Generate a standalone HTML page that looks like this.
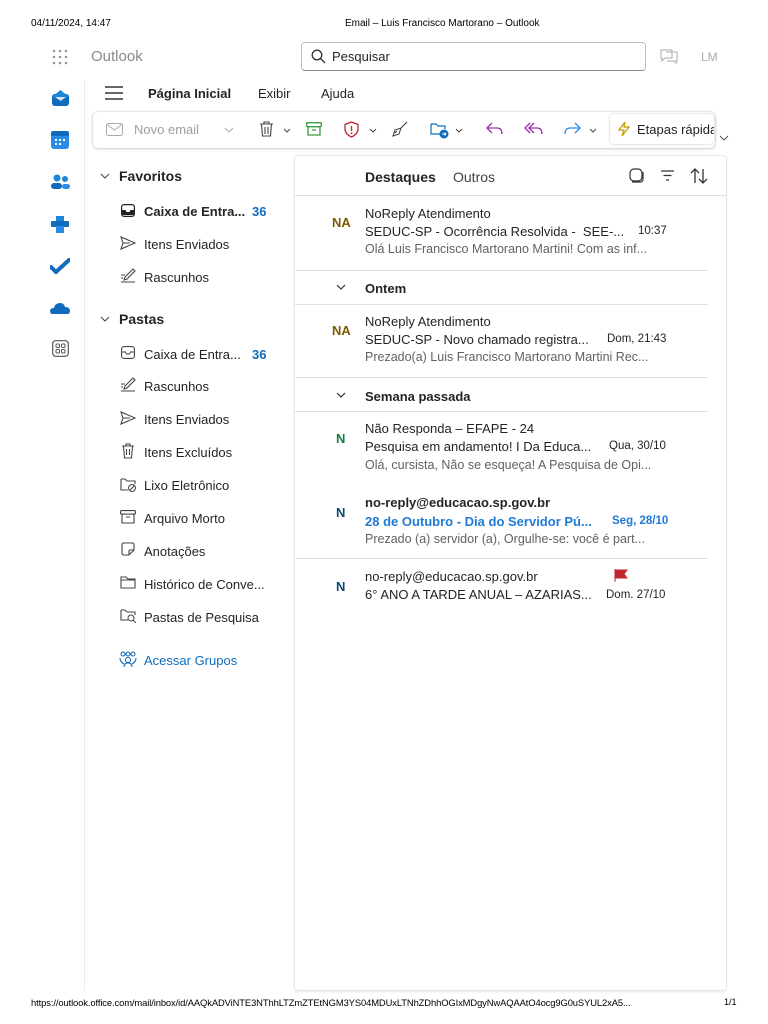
<!DOCTYPE html>
<html><head><meta charset="utf-8"><style>
*{margin:0;padding:0;box-sizing:border-box}
body{width:768px;height:1024px;background:#fff;font-family:"Liberation Sans",sans-serif;color:#242424;position:relative;overflow:hidden}
.a{position:absolute;white-space:nowrap}
.s13{font-size:13px}
.g{color:#616161}
.b{font-weight:bold}
.blue{color:#0f6cbd}
.line{position:absolute;height:1px;background:#e0e0e0}
svg{position:absolute}
</style></head><body>
<div class="a" style="left:31px;top:18px;font-size:10px;color:#000">04/11/2024, 14:47</div>
<div class="a" style="left:345px;top:18px;font-size:10px;color:#000">Email – Luis Francisco Martorano – Outlook</div>
<div class="a" style="left:31px;top:997px;font-size:9.4px;color:#000;letter-spacing:-0.1px">https://outlook.office.com/mail/inbox/id/AAQkADViNTE3NThhLTZmZTEtNGM3YS04MDUxLTNhZDhhOGIxMDgyNwAQAAtO4ocg9G0uSYUL2xA5...</div>
<div class="a" style="left:724px;top:997px;font-size:9px;color:#000">1/1</div>

<!-- header -->
<svg style="left:52px;top:49px" width="16" height="16"><g fill="#999"><circle cx="2" cy="2" r="1.3"/><circle cx="8" cy="2" r="1.3"/><circle cx="14" cy="2" r="1.3"/><circle cx="2" cy="8" r="1.3"/><circle cx="8" cy="8" r="1.3"/><circle cx="14" cy="8" r="1.3"/><circle cx="2" cy="14" r="1.3"/><circle cx="8" cy="14" r="1.3"/><circle cx="14" cy="14" r="1.3"/></g></svg>
<div class="a" style="left:91px;top:48px;font-size:15px;color:#8a8a8a">Outlook</div>
<div class="a" style="left:301px;top:42px;width:345px;height:29px;border:1px solid #bdbdbd;border-bottom-color:#888;border-radius:4px"></div>
<svg style="left:311px;top:49px" width="15" height="15"><circle cx="6" cy="6" r="4.8" fill="none" stroke="#333" stroke-width="1.3"/><path d="M9.5 9.5 L14 14" stroke="#333" stroke-width="1.3"/></svg>
<div class="a s13" style="left:332px;top:49px">Pesquisar</div>
<svg style="left:660px;top:48px" width="18" height="16"><path d="M1 2h11v8H5l-3 3v-3H1z M6 4h11v9h-1v2l-2-2H7" fill="none" stroke="#aaa" stroke-width="1"/></svg>
<div class="a" style="left:701px;top:50px;font-size:12px;color:#aaa">LM</div>

<!-- left rail -->
<div style="position:absolute;left:84px;top:80px;width:1px;height:910px;background:#ececec"></div>
<svg style="left:51px;top:89px" width="19" height="18"><rect x="1" y="5" width="17" height="12" rx="3" fill="#0f6cbd"/><path d="M1 8 L9.5 1 L18 8" fill="#1a86d9"/><path d="M4 8 L15 8 L9.5 12z" fill="#fff" opacity=".8"/></svg>
<svg style="left:51px;top:131px" width="18" height="18"><rect x="0" y="0" width="18" height="18" rx="3" fill="#2a8ce6"/><rect x="0" y="0" width="18" height="5" rx="2" fill="#0f6cbd"/><g fill="#fff"><rect x="4" y="8" width="2" height="2"/><rect x="8" y="8" width="2" height="2"/><rect x="12" y="8" width="2" height="2"/><rect x="4" y="12" width="2" height="2"/><rect x="8" y="12" width="2" height="2"/></g></svg>
<svg style="left:51px;top:174px" width="19" height="17"><circle cx="6" cy="4" r="3.5" fill="#1a86d9"/><circle cx="14" cy="5" r="3" fill="#1a86d9"/><rect x="0" y="9" width="11" height="6" rx="3" fill="#0f6cbd"/><rect x="11" y="10" width="8" height="5" rx="2.5" fill="#2a8ce6"/></svg>
<svg style="left:51px;top:216px" width="18" height="18"><rect x="5" y="0" width="8" height="6" fill="#1a86d9"/><rect x="0" y="5" width="18" height="6" rx="1" fill="#0f6cbd"/><rect x="5" y="10" width="8" height="7" fill="#2a8ce6"/></svg>
<svg style="left:50px;top:258px" width="20" height="16"><path d="M1 9 L6 14 L19 2" fill="none" stroke="#0f6cbd" stroke-width="4" stroke-linecap="round"/></svg>
<svg style="left:50px;top:301px" width="21" height="14"><path d="M3 13 Q0 13 0 10 Q0 7 4 7 Q5 2 10 2 Q14 2 15 6 Q20 6 20 10 Q20 13 17 13z" fill="#0f6cbd"/></svg>
<svg style="left:52px;top:340px" width="17" height="17"><rect x="0.7" y="0.7" width="15.6" height="15.6" rx="3" fill="none" stroke="#555" stroke-width="1.2"/><g fill="none" stroke="#555"><rect x="4" y="4" width="3.5" height="3.5" rx="1"/><rect x="9.5" y="4" width="3.5" height="3.5" rx="1"/><rect x="4" y="9.5" width="3.5" height="3.5" rx="1"/><rect x="9.5" y="9.5" width="3.5" height="3.5" rx="1"/></g></svg>

<!-- nav tabs -->
<svg style="left:105px;top:86px" width="18" height="14"><path d="M0 1h18M0 7h18M0 13h18" stroke="#333" stroke-width="1.5"/></svg>
<div class="a s13 b" style="left:148px;top:86px;font-weight:600">Página Inicial</div>
<div class="a s13" style="left:258px;top:86px">Exibir</div>
<div class="a s13" style="left:321px;top:86px">Ajuda</div>

<!-- toolbar -->
<div class="a" style="left:93px;top:112px;width:622px;height:36px;border-radius:5px;box-shadow:0 0 2px rgba(0,0,0,.2),0 1px 3px rgba(0,0,0,.15)"></div>
<svg style="left:106px;top:123px" width="17" height="13"><rect x="0.5" y="0.5" width="16" height="12" rx="2" fill="none" stroke="#aaa"/><path d="M1 1.5 L8.5 7 L16 1.5" fill="none" stroke="#aaa"/></svg>
<div class="a s13" style="left:134px;top:122px;color:#9e9e9e">Novo email</div>
<svg style="left:224px;top:127px" width="10" height="6"><path d="M1 1l4 4 4-4" fill="none" stroke="#aaa"/></svg>
<svg style="left:259px;top:121px" width="15" height="16"><path d="M1 3h13M5 3V1h5v2M2.5 3l1 12h8l1-12M6 6v7M9 6v7" fill="none" stroke="#444" stroke-width="1.1"/></svg>
<svg style="left:283px;top:128px" width="8" height="5"><path d="M1 1l3 3 3-3" fill="none" stroke="#444"/></svg>
<svg style="left:306px;top:122px" width="16" height="14"><rect x="0.7" y="0.7" width="14.6" height="4" rx="1" fill="none" stroke="#3a9a3a" stroke-width="1.3"/><path d="M2 5v8h12V5M6 8h4" fill="none" stroke="#3a9a3a" stroke-width="1.3"/></svg>
<svg style="left:344px;top:121px" width="15" height="17"><path d="M7.5 1 L14 3.5 V8 Q14 13 7.5 16 Q1 13 1 8 V3.5z" fill="none" stroke="#c4262e" stroke-width="1.3"/><path d="M7.5 5v5" stroke="#c4262e" stroke-width="1.4"/><circle cx="7.5" cy="12.3" r=".9" fill="#c4262e"/></svg>
<svg style="left:369px;top:128px" width="8" height="5"><path d="M1 1l3 3 3-3" fill="none" stroke="#444"/></svg>
<svg style="left:391px;top:121px" width="17" height="16"><path d="M16 1 L9 8 M10 7 L4 9 L2 15 L8 13 L10 7z M4 12 L6 10" fill="none" stroke="#444" stroke-width="1.1"/></svg>
<svg style="left:430px;top:121px" width="20" height="18"><path d="M1 3v10h9M1 3h5l2 2h7v3" fill="none" stroke="#0f6cbd" stroke-width="1.2"/><circle cx="14" cy="13" r="4.5" fill="#0f6cbd"/><path d="M12 13h4M14.5 11.5l1.5 1.5-1.5 1.5" fill="none" stroke="#fff"/></svg>
<svg style="left:455px;top:128px" width="8" height="5"><path d="M1 1l3 3 3-3" fill="none" stroke="#444"/></svg>
<svg style="left:486px;top:122px" width="18" height="14"><path d="M6 1 L1 6 L6 11 M1 6 H11 Q16 6 16 12" fill="none" stroke="#9b2fae" stroke-width="1.3"/></svg>
<svg style="left:524px;top:122px" width="20" height="14"><path d="M6 1 L1 6 L6 11 M10 1 L5 6 L10 11 M5 6 H13 Q18 6 18 12" fill="none" stroke="#9b2fae" stroke-width="1.3"/></svg>
<svg style="left:563px;top:122px" width="18" height="14"><path d="M12 1 L17 6 L12 11 M17 6 H7 Q2 6 2 12" fill="none" stroke="#2a8ce6" stroke-width="1.3"/></svg>
<svg style="left:589px;top:128px" width="8" height="5"><path d="M1 1l3 3 3-3" fill="none" stroke="#444"/></svg>
<div class="a" style="left:610px;top:114px;width:104px;height:30px;border-radius:4px;box-shadow:0 0 2px rgba(0,0,0,.25);overflow:hidden">
<svg style="left:7px;top:7px" width="14" height="16"><path d="M8 1 L2 9 H7 L5 15 L12 6 H7z" fill="none" stroke="#c19c00" stroke-width="1.2"/></svg>
<div class="a s13" style="left:27px;top:8px">Etapas rápidas</div></div>
<svg style="left:719px;top:135px" width="10" height="6"><path d="M1 1l4 4 4-4" fill="none" stroke="#555"/></svg>

<!-- folders -->
<svg style="left:100px;top:173px" width="10" height="6"><path d="M1 1l4 4 4-4" fill="none" stroke="#444"/></svg>
<div class="a b" style="left:119px;top:168px;font-size:14px;font-weight:600">Favoritos</div>
<svg style="left:121px;top:204px" width="14" height="13"><rect x="0.6" y="0.6" width="12.8" height="11.8" rx="2.5" fill="none" stroke="#222" stroke-width="1.2"/><path d="M1 6h3.5l1 2h3l1-2H13V11H1z" fill="#222"/></svg>
<div class="a s13 b" style="left:144px;top:204px">Caixa de Entra...</div>
<div class="a s13 b blue" style="left:252px;top:204px">36</div>
<svg style="left:120px;top:236px" width="16" height="14"><path d="M1 1 L15 7 L1 13 L3 7z M3 7h7" fill="none" stroke="#444" stroke-width="1.1"/></svg>
<div class="a s13" style="left:144px;top:237px">Itens Enviados</div>
<svg style="left:120px;top:268px" width="16" height="15"><path d="M13 1 L15 3 L7 11 L4 12 L5 9z M1 7h4M1 10h2M1 14h14" fill="none" stroke="#444" stroke-width="1.1"/></svg>
<div class="a s13" style="left:144px;top:270px">Rascunhos</div>

<svg style="left:100px;top:316px" width="10" height="6"><path d="M1 1l4 4 4-4" fill="none" stroke="#444"/></svg>
<div class="a b" style="left:119px;top:311px;font-size:14px;font-weight:600">Pastas</div>
<svg style="left:121px;top:346px" width="14" height="13"><rect x="0.6" y="0.6" width="12.8" height="11.8" rx="2.5" fill="none" stroke="#444" stroke-width="1.1"/><path d="M1 6h3.5l1 2h3l1-2H13" fill="none" stroke="#444"/></svg>
<div class="a s13" style="left:144px;top:347px">Caixa de Entra...</div>
<div class="a s13 b blue" style="left:252px;top:347px">36</div>
<svg style="left:120px;top:377px" width="16" height="15"><path d="M13 1 L15 3 L7 11 L4 12 L5 9z M1 7h4M1 10h2M1 14h14" fill="none" stroke="#444" stroke-width="1.1"/></svg>
<div class="a s13" style="left:144px;top:379px">Rascunhos</div>
<svg style="left:120px;top:411px" width="16" height="14"><path d="M1 1 L15 7 L1 13 L3 7z M3 7h7" fill="none" stroke="#444" stroke-width="1.1"/></svg>
<div class="a s13" style="left:144px;top:412px">Itens Enviados</div>
<svg style="left:121px;top:443px" width="14" height="16"><path d="M1 3h12M5 3V1h4v2M2.5 3l1 12h7l1-12M5.5 6v6M8.5 6v6" fill="none" stroke="#444" stroke-width="1.1"/></svg>
<div class="a s13" style="left:144px;top:445px">Itens Excluídos</div>
<svg style="left:120px;top:477px" width="17" height="15"><path d="M1 2v11h7M1 2h4l2 2h8v3" fill="none" stroke="#444" stroke-width="1.1"/><circle cx="12" cy="11" r="3.5" fill="none" stroke="#444"/><path d="M9.5 13.5l5-5" stroke="#444"/></svg>
<div class="a s13" style="left:144px;top:478px">Lixo Eletrônico</div>
<svg style="left:120px;top:510px" width="16" height="14"><rect x="0.6" y="0.6" width="14.8" height="3.5" rx="1" fill="none" stroke="#444" stroke-width="1.1"/><path d="M2 4v9h12V4M6 7h4" fill="none" stroke="#444" stroke-width="1.1"/></svg>
<div class="a s13" style="left:144px;top:511px">Arquivo Morto</div>
<svg style="left:121px;top:542px" width="14" height="14"><path d="M1 3 Q1 1 3 1 H11 Q13 1 13 3 V8 L8 13 H3 Q1 13 1 11z M8 13 V9 Q8 8 9 8 H13" fill="none" stroke="#444" stroke-width="1.1"/></svg>
<div class="a s13" style="left:144px;top:544px">Anotações</div>
<svg style="left:120px;top:576px" width="16" height="13"><path d="M1 1h5l2 2h7v9H1z M1 4h14" fill="none" stroke="#444" stroke-width="1.1"/></svg>
<div class="a s13" style="left:144px;top:577px">Histórico de Conve...</div>
<svg style="left:120px;top:608px" width="17" height="15"><path d="M1 2v10h7M1 2h4l2 2h8v3" fill="none" stroke="#444" stroke-width="1.1"/><circle cx="11" cy="10" r="3" fill="none" stroke="#444"/><path d="M13 12l3 3" stroke="#444"/></svg>
<div class="a s13" style="left:144px;top:610px">Pastas de Pesquisa</div>
<svg style="left:119px;top:651px" width="18" height="17"><g fill="none" stroke="#0f6cbd" stroke-width="1.1"><circle cx="4" cy="3" r="2"/><circle cx="9" cy="3" r="2"/><circle cx="14" cy="3" r="2"/><circle cx="9" cy="9" r="2.5"/><path d="M1 7 Q1 11 5 13 M17 7 Q17 11 13 13 M5 16 Q5 12 9 12 Q13 12 13 16"/></g></svg>
<div class="a s13 blue" style="left:144px;top:653px">Acessar Grupos</div>

<!-- message list panel -->
<div class="a" style="left:294px;top:155px;width:433px;height:836px;border:1px solid #e6e6e6;border-radius:4px;box-shadow:0 1px 2px rgba(0,0,0,.08)"></div>
<div class="a" style="left:365px;top:169px;font-size:14px;font-weight:600">Destaques</div>
<div class="a" style="left:453px;top:169px;font-size:14px;color:#424242">Outros</div>
<svg style="left:629px;top:168px" width="15" height="15"><rect x="1" y="1" width="12" height="12" rx="4" fill="none" stroke="#333" stroke-width="1.2"/><path d="M3 14 H11 Q14 14 14 11 V4" fill="none" stroke="#333" stroke-width="1.2"/></svg>
<svg style="left:660px;top:170px" width="15" height="11"><path d="M1 1h13M3.5 5.5h8M6 10h3" stroke="#333" stroke-width="1.2"/></svg>
<svg style="left:690px;top:168px" width="18" height="16"><path d="M5 15V1M1 5l4-4 4 4M13 1v14M9 11l4 4 4-4" fill="none" stroke="#333" stroke-width="1.3"/></svg>
<div class="line" style="left:295px;top:195px;width:431px"></div>

<div class="a s13 b" style="left:332px;top:215px;color:#7a5c00">NA</div>
<div class="a s13" style="left:365px;top:206px">NoReply Atendimento</div>
<div class="a s13" style="left:365px;top:224px">SEDUC-SP - Ocorrência Resolvida -&nbsp; SEE-...</div>
<div class="a" style="left:638px;top:225px;font-size:11.5px">10:37</div>
<div class="a" style="left:365px;top:242px;font-size:12.5px;color:#616161">Olá Luis Francisco Martorano Martini! Com as inf...</div>
<div class="line" style="left:295px;top:270px;width:413px"></div>
<svg style="left:336px;top:284px" width="10" height="6"><path d="M1 1l4 4 4-4" fill="none" stroke="#333" stroke-width="1.2"/></svg>
<div class="a s13 b" style="left:365px;top:281px;font-weight:600">Ontem</div>
<div class="line" style="left:295px;top:304px;width:413px"></div>

<div class="a s13 b" style="left:332px;top:323px;color:#7a5c00">NA</div>
<div class="a s13" style="left:365px;top:314px">NoReply Atendimento</div>
<div class="a s13" style="left:365px;top:332px">SEDUC-SP - Novo chamado registra...</div>
<div class="a" style="left:607px;top:333px;font-size:11.5px">Dom, 21:43</div>
<div class="a" style="left:365px;top:350px;font-size:12.5px;color:#616161">Prezado(a) Luis Francisco Martorano Martini Rec...</div>
<div class="line" style="left:295px;top:377px;width:413px"></div>
<svg style="left:336px;top:392px" width="10" height="6"><path d="M1 1l4 4 4-4" fill="none" stroke="#333" stroke-width="1.2"/></svg>
<div class="a s13 b" style="left:365px;top:389px;font-weight:600">Semana passada</div>
<div class="line" style="left:295px;top:411px;width:413px"></div>

<div class="a s13 b" style="left:336px;top:431px;color:#107c41">N</div>
<div class="a s13" style="left:365px;top:421px">Não Responda – EFAPE - 24</div>
<div class="a s13" style="left:365px;top:439px">Pesquisa em andamento! I Da Educa...</div>
<div class="a" style="left:609px;top:440px;font-size:11.5px">Qua, 30/10</div>
<div class="a" style="left:365px;top:458px;font-size:12.5px;color:#616161">Olá, cursista, Não se esqueça! A Pesquisa de Opi...</div>

<div class="a s13 b" style="left:336px;top:505px;color:#0b4a6f">N</div>
<div class="a s13 b" style="left:365px;top:495px">no-reply@educacao.sp.gov.br</div>
<div class="a s13 b blue" style="left:365px;top:514px;color:#1f7ad6">28 de Outubro - Dia do Servidor Pú...</div>
<div class="a b" style="left:612px;top:515px;font-size:11.5px;color:#1f7ad6">Seg, 28/10</div>
<div class="a" style="left:365px;top:532px;font-size:12.5px;color:#616161">Prezado (a) servidor (a), Orgulhe-se: você é part...</div>
<div class="line" style="left:295px;top:558px;width:413px"></div>

<div class="a s13 b" style="left:336px;top:579px;color:#0b4a6f">N</div>
<div class="a s13" style="left:365px;top:569px">no-reply@educacao.sp.gov.br</div>
<svg style="left:614px;top:569px" width="14" height="13"><path d="M1 0v13M1 1h12l-3 4 3 4H1" fill="#c4262e" stroke="#c4262e"/></svg>
<div class="a s13" style="left:365px;top:587px">6° ANO A TARDE ANUAL – AZARIAS...</div>
<div class="a" style="left:606px;top:589px;font-size:11.5px">Dom. 27/10</div>
</body></html>
